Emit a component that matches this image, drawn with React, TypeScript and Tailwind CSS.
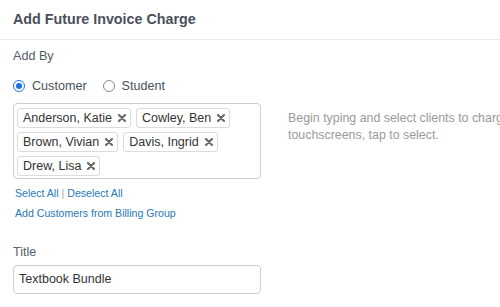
import * as React from "react";

const customers = [
    ["Anderson, Katie", "Cowley, Ben"],
    ["Brown, Vivian", "Davis, Ingrid"],
    ["Drew, Lisa"],
];

const RemoveIcon: React.FC = () => (
    <svg width="8" height="8" viewBox="0 0 8 8" className="ml-[6px]">
        <path d="M1 1L7 7M7 1L1 7" stroke="#6b6b6b" strokeWidth="2.2" strokeLinecap="round" />
    </svg>
);

const Tag: React.FC<{ name: string }> = ({ name }) => (
    <div className="h-[20px] flex items-center pl-[5px] pr-[4px] border border-[#dcdcdc] rounded-[3px] bg-white text-[12.5px] text-[#333]">
        <span>{name}</span>
        <RemoveIcon />
    </div>
);

const Radio: React.FC<{ checked?: boolean; label: string }> = ({ checked, label }) => (
    <label className="flex items-center gap-[7px]">
        {checked ? (
            <span className="w-[12px] h-[12px] rounded-full border-[1px] border-[#1a73e8] flex items-center justify-center">
                <span className="w-[6px] h-[6px] rounded-full bg-[#1a73e8]" />
            </span>
        ) : (
            <span className="w-[12px] h-[12px] rounded-full border border-[#8a8a8a] bg-white" />
        )}
        <span>{label}</span>
    </label>
);

export default function App() {
    return (
        <div className="w-[500px] h-[307px] overflow-hidden bg-white font-['Liberation_Sans',Arial,sans-serif]">
            <div className="pt-[9px] pb-[10px] px-[13px] border-b border-[#ececec]">
                <h1 className="text-[14.3px] leading-[20px] font-bold text-[#4a4f5a]">
                    Add Future Invoice Charge
                </h1>
            </div>
            <div className="px-[13px] pt-[7px]">
                <div className="text-[12.6px] leading-[18px] text-[#555b66]">Add By</div>
                <div className="mt-[12px] flex items-center gap-[16px] text-[12.6px] leading-[18px] text-[#4a4f5a]">
                    <Radio checked label="Customer" />
                    <Radio label="Student" />
                </div>
                <div className="mt-[8px] flex gap-[27px]">
                    <div className="w-[248px] shrink-0">
                        <div className="border border-[#cfcfcf] rounded-[4px] pt-[4px] pb-[2px] px-[3px] flex flex-col gap-[4px]">
                            {customers.map((row, i) => (
                                <div key={i} className="flex gap-[5px]">
                                    {row.map((name) => (
                                        <Tag key={name} name={name} />
                                    ))}
                                </div>
                            ))}
                        </div>
                        <div className="mt-[7px] pl-[2px] text-[10.6px] leading-[14px] text-[#2a78b4]">
                            <div>
                                Select All <span className="text-[#aaa]">|</span> Deselect All
                            </div>
                            <div className="mt-[6px]">Add Customers from Billing Group</div>
                        </div>
                    </div>
                    <div className="pt-[7px] w-[300px] shrink-0 text-[12.4px] leading-[17px] text-[#9a9a9a]">
                        Begin typing and select clients to charge. On
                        <br />
                        touchscreens, tap to select.
                    </div>
                </div>
                <div className="mt-[23px] text-[12.6px] leading-[18px] text-[#5a6070]">Title</div>
                <div className="mt-[4px] w-[248px] h-[29px] border border-[#cfcfcf] rounded-[4px] flex items-center px-[5px] text-[12.5px] text-[#333]">
                    Textbook Bundle
                </div>
            </div>
        </div>
    );
}
